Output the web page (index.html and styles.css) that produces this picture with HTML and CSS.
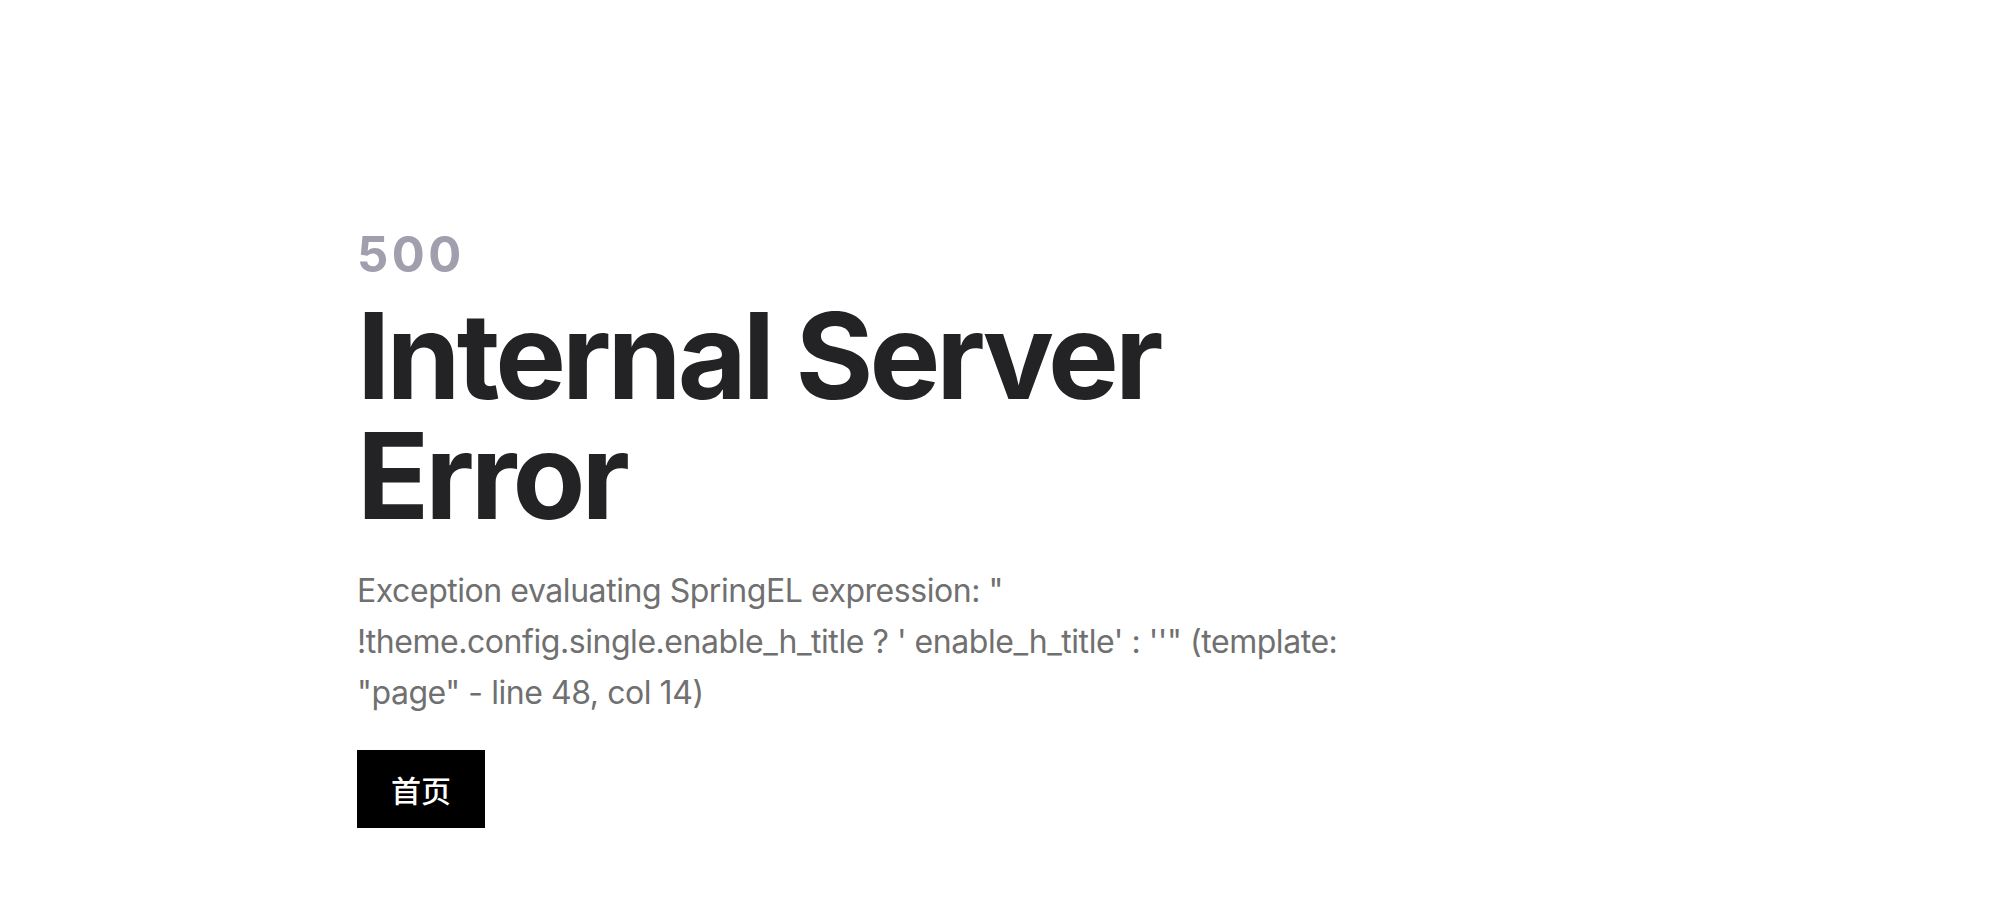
FILE: index.html
```html
<!DOCTYPE html>
<html lang="zh">
<head>
<meta charset="utf-8">
<title>500 Internal Server Error</title>
<link rel="stylesheet" href="styles.css">
</head>
<body>
<main class="page">
  <section class="error">
    <div class="error-code">500</div>
    <h1 class="error-title">Internal Server Error</h1>
    <p class="error-message">Exception evaluating SpringEL expression: " !theme.config.single.enable_h_title ? ' enable_h_title' : ''" (template: "page" - line 48, col 14)</p>
    <a class="home-btn" href="#">首页</a>
  </section>
</main>
</body>
</html>
```

FILE: styles.css
```css
html, body {
  margin: 0;
  padding: 0;
  background: #ffffff;
}

body {
  font-family: Inter, "Noto Sans", "Noto Sans CJK SC", sans-serif;
}

.page {
  width: 1284px;
  margin: 0 auto;
  padding-top: 224px;
}

.error {
  max-width: 1000px;
  display: flex;
  flex-direction: column;
  align-items: flex-start;
}

.error-code {
  font-size: 49px;
  line-height: 61px;
  font-weight: 700;
  letter-spacing: 0.07em;
  color: #a19fae;
}

.error-title {
  margin: 11px 0 0;
  font-size: 119px;
  line-height: 120px;
  font-weight: 700;
  letter-spacing: -0.033em;
  color: #232325;
}

.error-message {
  margin: 29px 0 0;
  font-size: 32px;
  line-height: 51px;
  color: #707070;
  letter-spacing: -0.014em;
}

.home-btn {
  margin-top: 32px;
  display: inline-block;
  padding: 24px 34px;
  font-family: "Noto Sans CJK SC", sans-serif;
  font-size: 30px;
  line-height: 30px;
  font-weight: 500;
  color: #ffffff;
  background: #000000;
  text-decoration: none;
}
```
